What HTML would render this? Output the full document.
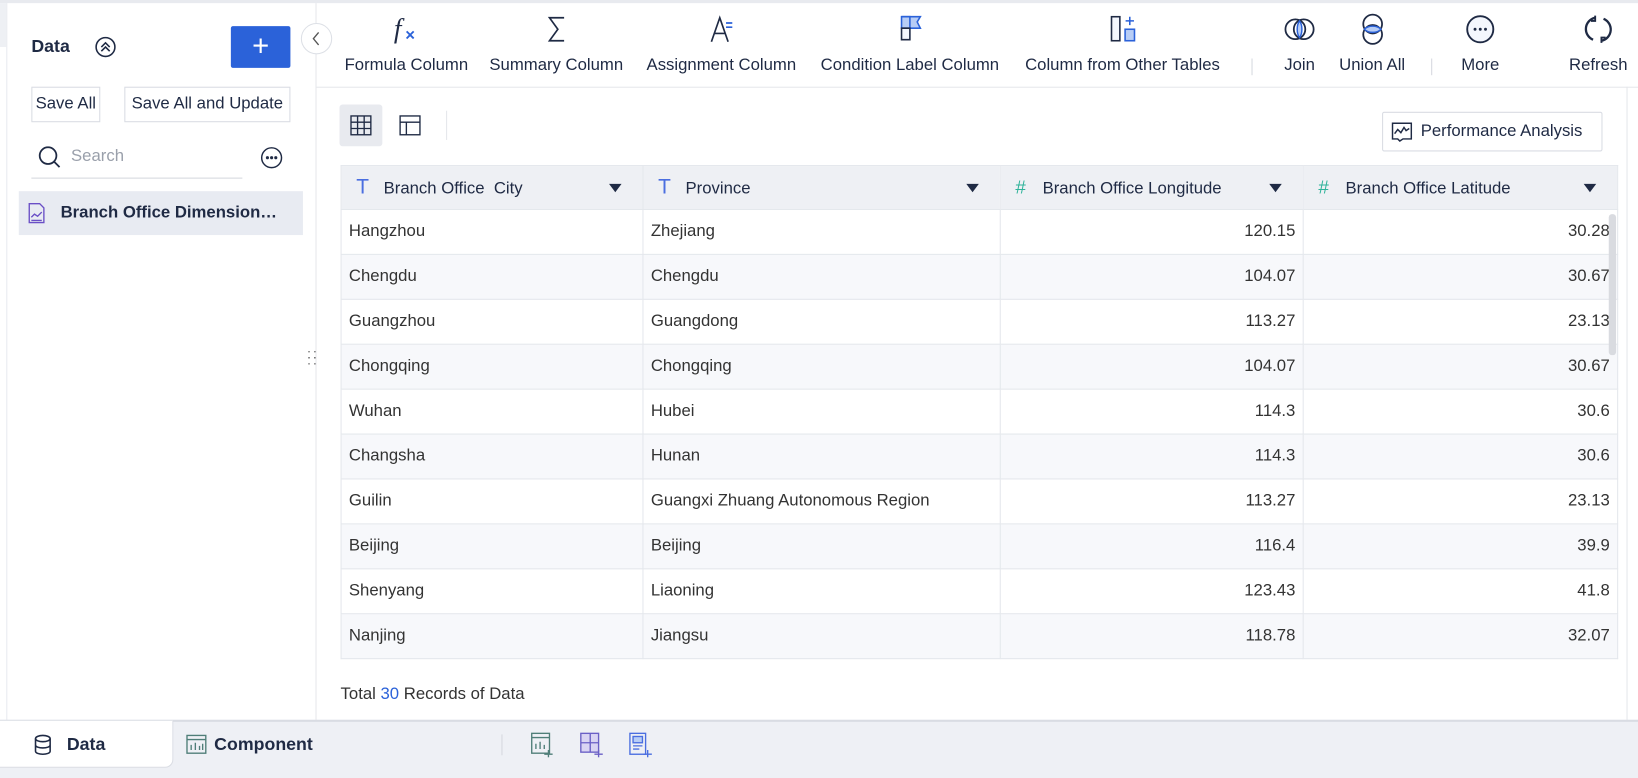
<!DOCTYPE html>
<html><head><meta charset="utf-8"><style>
*{box-sizing:border-box;margin:0;padding:0}
html,body{width:1638px;height:778px;overflow:hidden;background:#fff;font-family:"Liberation Sans",Arial,sans-serif;color:#1f2a44}
#w{position:absolute;left:0;top:0;width:1568px;height:745px;transform:scale(1.04465);transform-origin:0 0}
.a{position:absolute}
.tb{position:absolute;top:0;height:83px;text-align:center;font-size:16px;white-space:nowrap}
.tb svg{position:absolute;top:12px;left:50%;margin-left:-16px}
.tb span{position:absolute;top:54px;left:50%;transform:translateX(-50%)}
table{border-collapse:collapse;font-size:16px;color:#333;table-layout:fixed}
td{height:43px;border:1px solid #e4e7ec;padding:0 7px}
tr:nth-child(odd) td{background:#f7f8fb}
th{height:42px;background:#eef0f4;border:1px solid #e4e7ec;font-weight:normal;text-align:left;color:#1f2a44;padding:0 0 0 14px;position:relative}
th .c{position:absolute;right:20px;top:17px;width:0;height:0;border-left:6px solid transparent;border-right:6px solid transparent;border-top:8px solid #1f2a44}
.r{text-align:right}
.btn{position:absolute;border:1px solid #d9dce3;font-size:16px;color:#1f2a44;display:flex;align-items:center;justify-content:center;background:#fff}
</style></head><body><div id="w">
<div class="a" style="left:0;top:0;width:1568px;height:3px;background:#e8eaef"></div>
<div class="a" style="left:0;top:3px;width:6px;height:42px;background:#eef0f4"></div>
<div class="a" style="left:6px;top:3px;width:1px;height:687px;background:#e8eaef"></div>
<div class="a" style="left:302px;top:3px;width:1px;height:687px;background:#e5e7eb"></div>
<!-- sidebar -->
<div class="a" style="left:30px;top:35px;font-size:17px;font-weight:bold">Data</div>
<svg class="a" style="left:90px;top:34px" width="22" height="22" viewBox="0 0 22 22" fill="none" stroke="#1f2a44" stroke-width="1.5"><circle cx="11" cy="11" r="9"/><path d="M7 11l4-4 4 4M7 15l4-4 4 4"/></svg>
<div class="a" style="left:221px;top:25px;width:57px;height:40px;background:#2b62d9;border-radius:2px;color:#fff;font-size:28px;text-align:center;line-height:38px">+</div>
<div class="a" style="left:288px;top:22px;width:30px;height:30px;border-radius:50%;border:1px solid #dde0e6;background:#fff"></div>
<svg class="a" style="left:297px;top:29px" width="12" height="16"><path d="M8 2L3 8l5 6" stroke="#555" fill="none" stroke-width="1.3"/></svg>
<div class="btn" style="left:30px;top:83px;width:66px;height:34px">Save All</div>
<div class="btn" style="left:119px;top:83px;width:159px;height:34px">Save All and Update</div>
<svg class="a" style="left:36px;top:139px" width="24" height="24" fill="none" stroke="#1f2a44" stroke-width="1.7"><circle cx="10" cy="10" r="8"/><path d="M16 16l5 5"/></svg>
<div class="a" style="left:68px;top:141px;font-size:16px;color:#9aa0ab">Search</div>
<div class="a" style="left:30px;top:170px;width:202px;height:1px;background:#d5d8de"></div>
<svg class="a" style="left:249px;top:140px" width="22" height="22" fill="none" stroke="#1f2a44" stroke-width="1.4"><circle cx="11" cy="11" r="9.5"/><circle cx="7" cy="11" r=".8" fill="#1f2a44"/><circle cx="11" cy="11" r=".8" fill="#1f2a44"/><circle cx="15" cy="11" r=".8" fill="#1f2a44"/></svg>
<div class="a" style="left:18px;top:183px;width:272px;height:42px;background:#e8ebf2"></div>
<svg class="a" style="left:26px;top:194px" width="18" height="20" fill="none" stroke="#6a4fc6" stroke-width="1.3"><path d="M2 1h10l4 4v14H2z"/><path d="M4 14l3-3 3 2 4-4M4 17h10"/></svg>
<div class="a" style="left:58px;top:195px;font-size:16px;font-weight:bold;color:#1f2a44">Branch Office Dimension…</div>
<div class="a" style="left:294px;top:336px;font-size:13px;color:#666;line-height:6px;letter-spacing:2px">::<br>::</div>
<!-- toolbar -->
<div class="a" style="left:303px;top:83px;width:1265px;height:1px;background:#e5e7eb"></div>
<div class="tb" style="left:325px;width:128px"><svg width="32" height="32"><text x="4" y="24" font-family="Liberation Serif" font-style="italic" font-size="26" fill="#1f2a44">f</text><text x="15" y="27" font-size="16" font-weight="bold" fill="#2b62d9" font-family="Liberation Sans">×</text></svg><span>Formula Column</span></div>
<div class="tb" style="left:464px;width:137px"><svg width="32" height="32"><path d="M23 5H9l8 11-8 11h14" fill="none" stroke="#1f2a44" stroke-width="1.6"/></svg><span>Summary Column</span></div>
<div class="tb" style="left:613px;width:155px"><svg width="32" height="32"><path d="M6 28L14 5l8 23M9 20h10" fill="none" stroke="#1f2a44" stroke-width="1.6"/><path d="M20 10h6M20 14h6" stroke="#2b62d9" stroke-width="1.6"/></svg><span>Assignment Column</span></div>
<div class="tb" style="left:779px;width:184px"><svg width="32" height="32"><path d="M8 4h18l-3 5 3 6H16" fill="#b7cdf6" stroke="#2b62d9" stroke-width="1.5"/><path d="M8 4h8v11H8z" fill="#b7cdf6" stroke="#2b62d9" stroke-width="1.5"/><path d="M8 15h8v11H8z" fill="#f4f7fd" stroke="#1f2a44" stroke-width="1.5"/></svg><span>Condition Label Column</span></div>
<div class="tb" style="left:974px;width:201px"><svg width="32" height="32"><rect x="5" y="4" width="8" height="23" fill="#f4f7fd" stroke="#1f2a44" stroke-width="1.5"/><rect x="18" y="16" width="9" height="11" fill="#b7cdf6" stroke="#2b62d9" stroke-width="1.5"/><path d="M22.5 4v8M18.5 8h8" stroke="#2b62d9" stroke-width="1.5"/></svg><span>Column from Other Tables</span></div>
<div class="a" style="left:1198px;top:56px;width:1px;height:16px;background:#d5d8de"></div>
<div class="tb" style="left:1225px;width:38px"><svg width="32" height="32"><circle cx="12" cy="16" r="9.5" fill="none" stroke="#1f2a44" stroke-width="1.7"/><circle cx="20" cy="16" r="9.5" fill="none" stroke="#1f2a44" stroke-width="1.7"/><path d="M16 8c-3 4-3 12 0 16c3-4 3-12 0-16z" fill="#b7cdf6" stroke="#2b62d9" stroke-width="1.4"/></svg><span>Join</span></div>
<div class="tb" style="left:1280px;width:67px"><svg width="32" height="32"><circle cx="16" cy="11" r="9" fill="none" stroke="#1f2a44" stroke-width="1.7"/><circle cx="16" cy="21" r="9" fill="none" stroke="#1f2a44" stroke-width="1.7"/><path d="M8 16c4-4 12-4 16 0c-4 4-12 4-16 0z" fill="#b7cdf6" stroke="#2b62d9" stroke-width="1.4"/></svg><span>Union All</span></div>
<div class="a" style="left:1370px;top:56px;width:1px;height:16px;background:#d5d8de"></div>
<div class="tb" style="left:1395px;width:44px"><svg width="32" height="32"><circle cx="16" cy="16" r="12.5" fill="#f4f7fd" stroke="#1f2a44" stroke-width="1.8"/><circle cx="11" cy="16" r="1.4" fill="#1f2a44"/><circle cx="16" cy="16" r="1.4" fill="#1f2a44"/><circle cx="21" cy="16" r="1.4" fill="#1f2a44"/></svg><span>More</span></div>
<div class="tb" style="left:1500px;width:60px"><svg width="32" height="32" fill="none" stroke="#1f2a44" stroke-width="2.2"><path d="M13 5A11 11 0 0 0 11 26M19 27A11 11 0 0 0 21 6"/><path d="M13 3v5l-4 0M19 29v-5h4" stroke-width="1.8"/></svg><span>Refresh</span></div>
<!-- view toggles -->
<div class="a" style="left:325px;top:100px;width:41px;height:40px;background:#e8eaef;border-radius:3px"></div>
<svg class="a" style="left:335px;top:110px" width="21" height="20" fill="none" stroke="#1f2a44" stroke-width="1.3"><rect x="1" y="1" width="19" height="18"/><path d="M7.3 1v18M13.6 1v18M1 7h19M1 13h19"/></svg>
<svg class="a" style="left:382px;top:110px" width="21" height="20" fill="none" stroke="#1f2a44" stroke-width="1.3"><rect x="1" y="1" width="19" height="18"/><path d="M1 7h19M7 7v12"/></svg>
<div class="a" style="left:427px;top:106px;width:1px;height:28px;background:#e5e7eb"></div>
<div class="btn" style="left:1323px;top:107px;width:211px;height:38px;border-radius:2px;justify-content:flex-start;padding-left:36px">Performance Analysis</div>
<svg class="a" style="left:1332px;top:116px" width="20" height="20" fill="none" stroke="#1f2a44" stroke-width="1.4"><path d="M6 17H1V2h18v15h-8l-3 2z"/><path d="M3 12l3-4 3 3 3-5 2 3 3-2"/></svg>
<!-- table -->
<table class="a" style="left:326px;top:158px;width:1222px">
<colgroup><col style="width:289px"><col style="width:342px"><col style="width:290px"><col style="width:301px"></colgroup>
<tr><th><span style="color:#4a6ee0;font-size:20px;margin-right:14px">T</span>Branch Office&nbsp; City<i class="c"></i></th><th><span style="color:#4a6ee0;font-size:20px;margin-right:14px">T</span>Province<i class="c"></i></th><th><span style="color:#2fb39a;font-size:18px;margin-right:16px">#</span>Branch Office Longitude<i class="c"></i></th><th><span style="color:#2fb39a;font-size:18px;margin-right:16px">#</span>Branch Office Latitude<i class="c"></i></th></tr>
<tr><td>Hangzhou</td><td>Zhejiang</td><td class="r">120.15</td><td class="r">30.28</td></tr>
<tr><td>Chengdu</td><td>Chengdu</td><td class="r">104.07</td><td class="r">30.67</td></tr>
<tr><td>Guangzhou</td><td>Guangdong</td><td class="r">113.27</td><td class="r">23.13</td></tr>
<tr><td>Chongqing</td><td>Chongqing</td><td class="r">104.07</td><td class="r">30.67</td></tr>
<tr><td>Wuhan</td><td>Hubei</td><td class="r">114.3</td><td class="r">30.6</td></tr>
<tr><td>Changsha</td><td>Hunan</td><td class="r">114.3</td><td class="r">30.6</td></tr>
<tr><td>Guilin</td><td>Guangxi Zhuang Autonomous Region</td><td class="r">113.27</td><td class="r">23.13</td></tr>
<tr><td>Beijing</td><td>Beijing</td><td class="r">116.4</td><td class="r">39.9</td></tr>
<tr><td>Shenyang</td><td>Liaoning</td><td class="r">123.43</td><td class="r">41.8</td></tr>
<tr><td>Nanjing</td><td>Jiangsu</td><td class="r">118.78</td><td class="r">32.07</td></tr>
</table>
<div class="a" style="left:1540px;top:205px;width:7px;height:135px;background:#d9dbe0;border-radius:3px"></div>
<div class="a" style="left:1557px;top:83px;width:1px;height:607px;background:#e5e7eb"></div>
<div class="a" style="left:326px;top:656px;font-size:16px;color:#333">Total <span style="color:#2b62d9">30</span> Records of Data</div>
<!-- bottom bar -->
<div class="a" style="left:0;top:689px;width:1568px;height:56px;background:#eef0f5;border-top:2px solid #d9dce3"></div>
<div class="a" style="left:0;top:690px;width:166px;height:45px;background:#fff;border-bottom-right-radius:8px;border-right:1px solid #d9dce3;border-bottom:1px solid #d9dce3"></div>
<svg class="a" style="left:32px;top:703px" width="18" height="20" fill="none" stroke="#1f2a44" stroke-width="1.5"><ellipse cx="9" cy="4" rx="7" ry="3"/><path d="M2 4v12c0 4 14 4 14 0V4M2 10c0 4 14 4 14 0"/></svg>
<div class="a" style="left:64px;top:703px;font-size:17px;font-weight:bold">Data</div>
<svg class="a" style="left:178px;top:703px" width="20" height="19" fill="none" stroke="#4f7e78" stroke-width="1.3"><rect x="1" y="1" width="18" height="17"/><path d="M1 5h18M5 15v-5M9 15v-7M13 15v-4M16 15v-6"/></svg>
<div class="a" style="left:205px;top:703px;font-size:17px;font-weight:bold">Component</div>
<div class="a" style="left:480px;top:703px;width:1px;height:20px;background:#d5d8de"></div>
<svg class="a" style="left:508px;top:701px" width="24" height="24" fill="none" stroke="#4f7e78" stroke-width="1.3"><rect x="1" y="1" width="17" height="19"/><path d="M1 5h17M5 16v-5M9 16v-7M13 16v-4M17 17v7M13 21h8"/></svg>
<svg class="a" style="left:555px;top:701px" width="24" height="24" fill="none" stroke="#6a5fc6" stroke-width="1.3"><rect x="1" y="1" width="17" height="18" fill="#d9d4f3"/><path d="M10 1v18M1 10h17M18 17v7M14 21h8"/></svg>
<svg class="a" style="left:602px;top:701px" width="24" height="24" fill="none" stroke="#4a6ee0" stroke-width="1.3"><rect x="1" y="1" width="15" height="20"/><rect x="4" y="4" width="9" height="6" fill="#b7cdf6"/><path d="M4 13h9M4 16h6M18 17v7M14 21h8"/></svg>
</div></body></html>
